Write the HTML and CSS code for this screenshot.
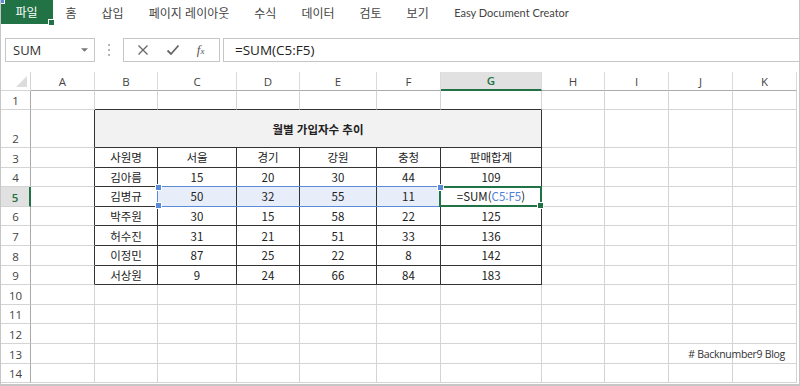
FILE: index.html
```html
<!DOCTYPE html>
<html lang="ko">
<head>
    <meta charset="UTF-8">
    <title>월별 가입자수 추이</title>
    <link rel="stylesheet" href="styles.css">
</head>
<body>
    <div class="app">
        <nav class="tabs">
            <span class="tab active">파일</span>
            <span class="tab">홈</span>
            <span class="tab">삽입</span>
            <span class="tab">페이지 레이아웃</span>
            <span class="tab">수식</span>
            <span class="tab">데이터</span>
            <span class="tab">검토</span>
            <span class="tab">보기</span>
            <span class="tab latin">Easy Document Creator</span>
        </nav>

        <div class="fbar">
            <div class="namebox">
                <span>SUM</span>
                <svg class="caret" viewBox="0 0 8 4"><path d="M0 0h8L4 4z" fill="#777"/></svg>
            </div>
            <div class="grip"><i></i><i></i><i></i></div>
            <div class="fbtns">
                <svg viewBox="0 0 12 12" fill="none" stroke="#666" stroke-width="1.3"><path d="M1.5 1.5l9 9M10.5 1.5l-9 9"/></svg>
                <svg viewBox="0 0 14 12" fill="none" stroke="#666" stroke-width="1.8"><path d="M1.5 6.5l3.5 3.5 7.5-8.5"/></svg>
                <span class="fx">f<small>x</small></span>
            </div>
            <div class="finput">=SUM(C5:F5)</div>
        </div>

        <div class="sheet" id="sheet">
            <div class="corner"><span></span></div>
        </div>
    </div>

    <script>
        const cols = ["A", "B", "C", "D", "E", "F", "G", "H", "I", "J", "K"];
        const data = {
            3: ["사원명", "서울", "경기", "강원", "충청", "판매합계"],
            4: ["김아름", "15", "20", "30", "44", "109"],
            5: ["김병규", "50", "32", "55", "11", ""],
            6: ["박주원", "30", "15", "58", "22", "125"],
            7: ["허수진", "31", "21", "51", "33", "136"],
            8: ["이정민", "87", "25", "22", "8", "142"],
            9: ["서상원", "9", "24", "66", "84", "183"]
        };
        const sheet = document.getElementById("sheet");

        function cell(cls, text, row, col) {
            const el = document.createElement("div");
            el.className = cls;
            if (text) el.textContent = text;
            if (row) el.style.gridRow = row;
            if (col) el.style.gridColumn = col;
            sheet.appendChild(el);
            return el;
        }

        // column headers
        cols.forEach((c, i) => cell("ch" + (c === "G" ? " on" : ""), c, 1, i + 2));

        for (let r = 1; r <= 14; r++) {
            cell("rh" + (r === 5 ? " on" : ""), String(r), r + 1, 1);
            cols.forEach((c, i) => {
                const inTable = r >= 2 && r <= 9 && i >= 1 && i <= 6;
                let cls = "c";
                if (inTable) cls += " tb";
                if (r === 1 && i >= 1 && i <= 6) cls += " tt";
                if (c === "A" && r >= 2 && r <= 9) cls += " tl";
                if (r === 2 && c === "B") {
                    cell(cls + " title", "월별 가입자수 추이", 3, "3 / 9");
                    return;
                }
                if (r === 2 && i >= 2 && i <= 6) return;
                if (r === 5 && i >= 2 && i <= 5) cls += " sel";
                const el = cell(cls, data[r] ? data[r][i - 1] : "", r + 1, i + 2);
                if (r === 5 && c === "G") {
                    el.innerHTML = '=SUM(<span class="ref">C5:F5</span>)';
                }
            });
        }

        // selection overlays
        cell("range", "", 6, "4 / 8");
        cell("active", "", 6, 8);
        cell("note", "# Backnumber9 Blog", 14, "11 / 13");
    </script>
</body>
</html>
```

FILE: styles.css
```css
* {
    box-sizing: border-box;
    margin: 0;
    padding: 0;
}

body {
    background: #fff;
    font-family: "Noto Sans CJK KR", "Noto Sans", sans-serif;
    color: #222;
}

.app {
    width: 800px;
    height: 386px;
    overflow: hidden;
    border-left: 1px solid #c6c6c6;
    border-right: 1px solid #c6c6c6;
    border-bottom: 2px solid #c6c6c6;
}

.tabs {
    display: flex;
    height: 24px;
    align-items: stretch;
    font-size: 12px;
    color: #444;
}

.tab {
    display: flex;
    align-items: center;
    padding: 0 12.5px;
}

.tab.active {
    background: #217346;
    color: #fff;
    width: 53px;
    justify-content: center;
    margin-left: -1px;
}

.tab.latin {
    font-family: Lato, sans-serif;
    font-size: 11px;
    padding-left: 13px;
}

.fbar {
    display: flex;
    align-items: center;
    height: 24px;
    margin-top: 14px;
    padding-left: 4px;
}

.namebox {
    width: 90px;
    height: 24px;
    border: 1px solid #c6c6c6;
    display: flex;
    align-items: center;
    justify-content: space-between;
    padding: 0 6px 0 7px;
    font-family: "Open Sans", sans-serif;
    font-size: 13px;
    color: #333;
}

.caret {
    width: 7px;
    height: 4px;
}

.grip {
    width: 28px;
    display: flex;
    flex-direction: column;
    align-items: center;
    gap: 3px;
}

.grip i {
    width: 2px;
    height: 2px;
    background: #b5b5b5;
}

.fbtns {
    width: 97px;
    height: 24px;
    border: 1px solid #c6c6c6;
    display: flex;
    align-items: center;
    justify-content: space-around;
    padding: 0 6px 0 4px;
}

.fbtns svg {
    width: 12px;
    height: 12px;
}

.fbtns svg + svg {
    width: 14px;
}

.fx {
    font-family: "Liberation Serif", serif;
    font-style: italic;
    font-size: 13px;
    color: #555;
}

.fx small {
    font-size: 9px;
}

.finput {
    flex: 1;
    height: 24px;
    margin-left: 3px;
    border: 1px solid #c6c6c6;
    border-right: none;
    display: flex;
    align-items: center;
    padding-left: 11px;
    font-family: "Open Sans", sans-serif;
    font-size: 13.5px;
    color: #222;
}

.sheet {
    margin-top: 10px;
    display: grid;
    grid-template-columns: 30px 64px 63px 79px 63px 77px 64px 101px 63px 64px 64px 64px;
    grid-template-rows: 19px 19px 38px repeat(12, 19.6px);
    font-size: 11.5px;
}

.corner {
    grid-row: 1;
    grid-column: 1;
    border-right: 1px solid #d4d4d4;
    border-bottom: 1px solid #d4d4d4;
    position: relative;
}

.corner span {
    position: absolute;
    right: 3px;
    bottom: 3px;
    border-left: 11px solid transparent;
    border-bottom: 11px solid #dcdcdc;
}

.ch, .rh {
    display: flex;
    align-items: center;
    justify-content: center;
    color: #444;
    font-family: "Open Sans", sans-serif;
    font-size: 11.5px;
    border-right: 1px solid #dadada;
    border-bottom: 1px solid #ababab;
}

.rh {
    border-bottom: 1px solid #d4d4d4;
    border-right: 1px solid #ababab;
    align-items: flex-end;
    padding-bottom: 1px;
}

.ch.on {
    background: #e1e1e1;
    color: #217346;
    border-bottom: 2px solid #217346;
    font-weight: 600;
}

.rh.on {
    background: #e1e1e1;
    color: #217346;
    border-right: 2px solid #217346;
    font-weight: 600;
}

.c {
    border-right: 1px solid #d4d4d4;
    border-bottom: 1px solid #d4d4d4;
    display: flex;
    align-items: center;
    justify-content: center;
    white-space: nowrap;
}

.c.tb {
    border-right-color: #333;
    border-bottom-color: #333;
}

.c.tt {
    border-bottom-color: #333;
}

.c.tl {
    border-right-color: #333;
}

.c.title {
    background: #f2f2f2;
    font-weight: 700;
}

.c.sel {
    background: #e8eef9;
}

.ref {
    color: #4e80d6;
}

.range {
    margin: -1px 0 0 -1px;
    border: 1px solid #5b8ad6;
    border-right: none;
    position: relative;
    pointer-events: none;
}

.range::before,
.range::after {
    content: "";
    position: absolute;
    left: -3px;
    width: 5px;
    height: 5px;
    background: #5b8ad6;
    border: 1px solid #fff;
}

.range::before {
    top: -3px;
}

.range::after {
    bottom: -3px;
}

.active {
    margin: -1px 0 0 -2px;
    border: 2px solid #217346;
    position: relative;
    pointer-events: none;
}

.active::before,
.active::after {
    content: "";
    position: absolute;
    width: 5px;
    height: 5px;
    border: 1px solid #fff;
}

.active::before {
    left: -4px;
    top: -4px;
    background: #5b8ad6;
}

.active::after {
    right: -4px;
    bottom: -4px;
    background: #217346;
}

.note {
    display: flex;
    align-items: center;
    justify-content: flex-end;
    padding-right: 12px;
    font-family: "Open Sans", sans-serif;
    font-size: 10.5px;
    color: #333;
    letter-spacing: -0.3px;
}
```
